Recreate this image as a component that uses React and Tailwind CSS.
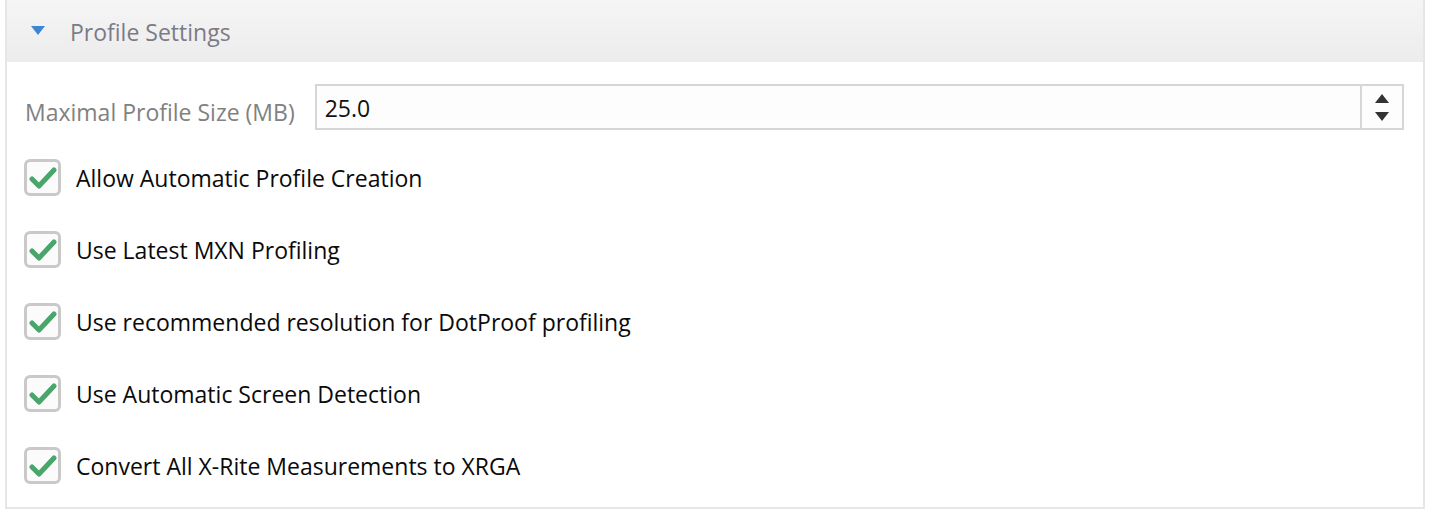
import React from "react";

const items = [
  "Allow Automatic Profile Creation",
  "Use Latest MXN Profiling",
  "Use recommended resolution for DotProof profiling",
  "Use Automatic Screen Detection",
  "Convert All X-Rite Measurements to XRGA",
];

function Check() {
  return (
    <div className="w-[37px] h-[37px] shrink-0 rounded-[6px] border-[3px] border-[#c9c9c9] bg-[#fbfbfb] flex items-center justify-center">
      <svg width="28" height="24" viewBox="0 0 28 24">
        <path d="M3 13 L10 20 L25 4" fill="none" stroke="#4aa56b" strokeWidth="5" strokeLinecap="round" strokeLinejoin="round" />
      </svg>
    </div>
  );
}

export default function App() {
  return (
    <div className="w-[1432px] h-[512px] bg-white pl-[5px] pr-[7px]" style={{ fontFamily: '"Open Sans", "Noto Sans", sans-serif' }}>
      <div className="h-[509px] border-l-2 border-r-2 border-b-2 border-[#e6e6e6] flex flex-col">
        <div className="h-[62px] shrink-0 bg-gradient-to-b from-[#f5f5f5] to-[#ececec] flex items-center pl-[23px]">
          <svg width="16" height="11" viewBox="0 0 16 11" className="mt-[-2px]">
            <path d="M1 1 L15 1 L8 10 Z" fill="#3d86d6" />
          </svg>
          <span className="ml-[24px] text-[23px] text-[#7b7b86] leading-none mt-[3px]">Profile Settings</span>
        </div>
        <div className="flex items-center pl-[18px] pr-[19px] pt-[22px]">
          <span className="text-[23px] text-[#818181] leading-none mt-[10px]">Maximal Profile Size (MB)</span>
          <div className="ml-[20px] flex-1 h-[46px] border-2 border-[#d6d6d6] bg-[#fdfdfd] flex">
            <div className="flex-1 flex items-center pl-[8px] pt-[3px] text-[23px] text-[#111] leading-none">25.0</div>
            <div className="w-[42px] border-l-2 border-[#d6d6d6] flex flex-col items-center justify-center gap-[9px]">
              <svg width="14" height="9" viewBox="0 0 14 9"><path d="M0 9 L7 0 L14 9 Z" fill="#333" /></svg>
              <svg width="14" height="9" viewBox="0 0 14 9"><path d="M0 0 L14 0 L7 9 Z" fill="#333" /></svg>
            </div>
          </div>
        </div>
        <div className="flex flex-col gap-[35px] pl-[17px] pt-[29px]">
          {items.map((t) => (
            <div key={t} className="flex items-center h-[37px]">
              <Check />
              <span className="ml-[15px] text-[23px] text-[#0a0a0a] leading-none mt-[1px]">{t}</span>
            </div>
          ))}
        </div>
      </div>
    </div>
  );
}
